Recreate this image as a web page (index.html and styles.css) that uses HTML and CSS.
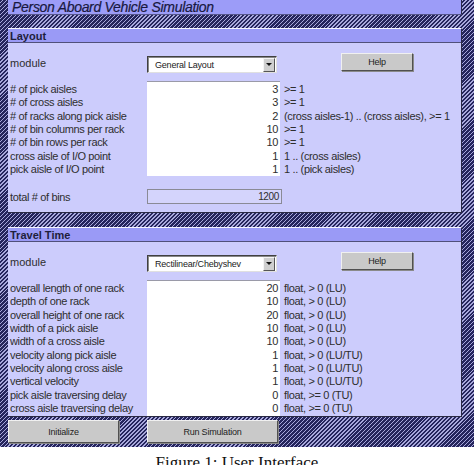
FILE: index.html
```html
<!DOCTYPE html>
<html>
<head>
<meta charset="utf-8">
<link rel="stylesheet" href="styles.css">
</head>
<body>
<div class="app">
  <div class="titlebar">Person Aboard Vehicle Simulation</div>

  <section class="panel panel-layout">
    <div class="panel-head">Layout</div>
    <div class="panel-body">
      <div class="module-row">
        <div class="label">module</div>
        <div class="select"><span class="select-text">General Layout</span><span class="select-arrow"><span class="tri"></span></span></div>
        <button class="btn help">Help</button>
      </div>
      <div class="fields">
        <div class="col labels">
          <div>&#35; of pick aisles</div>
          <div>&#35; of cross aisles</div>
          <div>&#35; of racks along pick aisle</div>
          <div>&#35; of bin columns per rack</div>
          <div>&#35; of bin rows per rack</div>
          <div>cross aisle of I/O point</div>
          <div>pick aisle of I/O point</div>
        </div>
        <div class="col values">
          <div>3</div><div>3</div><div>2</div><div>10</div><div>10</div><div>1</div><div>1</div>
        </div>
        <div class="col descs">
          <div>&gt;= 1</div>
          <div>&gt;= 1</div>
          <div>(cross aisles-1) .. (cross aisles), &gt;= 1</div>
          <div>&gt;= 1</div>
          <div>&gt;= 1</div>
          <div>1 .. (cross aisles)</div>
          <div>1 .. (pick aisles)</div>
        </div>
      </div>
      <div class="total-row">
        <div class="label">total # of bins</div>
        <div class="total-box">1200</div>
      </div>
    </div>
  </section>

  <section class="panel panel-travel">
    <div class="panel-head">Travel Time</div>
    <div class="panel-body">
      <div class="module-row">
        <div class="label">module</div>
        <div class="select"><span class="select-text">Rectilinear/Chebyshev</span><span class="select-arrow"><span class="tri"></span></span></div>
        <button class="btn help">Help</button>
      </div>
      <div class="fields fields-travel">
        <div class="col labels">
          <div>overall length of one rack</div>
          <div>depth of one rack</div>
          <div>overall height of one rack</div>
          <div>width of a pick aisle</div>
          <div>width of a cross aisle</div>
          <div>velocity along pick aisle</div>
          <div>velocity along cross aisle</div>
          <div>vertical velocity</div>
          <div>pick aisle traversing delay</div>
          <div>cross aisle traversing delay</div>
        </div>
        <div class="col values">
          <div>20</div><div>10</div><div>20</div><div>10</div><div>10</div><div>1</div><div>1</div><div>1</div><div>0</div><div>0</div>
        </div>
        <div class="col descs">
          <div>float, &gt; 0 (LU)</div>
          <div>float, &gt; 0 (LU)</div>
          <div>float, &gt; 0 (LU)</div>
          <div>float, &gt; 0 (LU)</div>
          <div>float, &gt; 0 (LU)</div>
          <div>float, &gt; 0 (LU/TU)</div>
          <div>float, &gt; 0 (LU/TU)</div>
          <div>float, &gt; 0 (LU/TU)</div>
          <div>float, &gt;= 0 (TU)</div>
          <div>float, &gt;= 0 (TU)</div>
        </div>
      </div>
    </div>
  </section>

  <div class="actions">
    <button class="btn act act-init">Initialize</button>
    <button class="btn act act-run">Run Simulation</button>
  </div>
</div>
<div class="caption">Figure 1: User Interface</div>
</body>
</html>
```

FILE: styles.css
```css
html, body {
  margin: 0;
  padding: 0;
  background: #ffffff;
}
body {
  width: 474px;
  height: 465px;
  overflow: hidden;
  font-family: "Liberation Sans", Arial, sans-serif;
  color: #2e2e2e;
}
.app {
  width: 474px;
  height: 447px;
  box-sizing: border-box;
  padding: 0 12px 0 8px;
  background: repeating-linear-gradient(135deg, #25255c 0px, #25255c 1.8px, #a8a8dc 1.8px, #a8a8dc 2.8px);
  overflow: hidden;
}
.titlebar {
  height: 14px;
  background: #9c9cf8;
  border-bottom: 1px solid #55558a;
  border-right: 1px solid #2a2a4a;
  font-style: italic;
  font-size: 14px;
  line-height: 15px;
  padding-left: 4px;
  color: #181840;
  white-space: nowrap;
  letter-spacing: -0.3px;
  -webkit-text-stroke: 0.2px #181840;
}
.panel {
  background: #ccccfc;
  border-top: 1px solid #f4f4ff;
  border-right: 1px solid #2a2a44;
  border-bottom: 1px solid #2a2a44;
  overflow: hidden;
}
.panel-layout { margin-top: 13px; height: 183px; }
.panel-travel { margin-top: 14px; height: 188px; }
.panel-head {
  height: 13px;
  background: #9a9af6;
  border-bottom: 1px solid #50507a;
  font-weight: bold;
  font-size: 11px;
  line-height: 14px;
  padding-left: 2px;
  color: #1e1e3c;
}
.panel-body {
  font-size: 11px;
}
.label {
  width: 137px;
  padding-left: 2px;
  flex: none;
}
.module-row {
  display: flex;
  height: 20px;
  margin-top: 10px;
}
.module-row .label {
  line-height: 20px;
}
.select {
  width: 128px;
  height: 15px;
  margin-top: 3px;
  background: #ffffff;
  border-top: 1px solid #404040;
  border-left: 1px solid #404040;
  border-right: 1px solid #e0e0e0;
  border-bottom: 1px solid #e0e0e0;
  display: flex;
  align-items: center;
  box-shadow: inset 1px 1px 0 #888;
  flex: none;
}
.select-text {
  flex: 1;
  font-size: 9px;
  padding-left: 7px;
  color: #222;
  letter-spacing: -0.2px;
  white-space: nowrap;
}
.select-arrow {
  width: 10px;
  height: 12px;
  margin-right: 1px;
  background: #cfcfcf;
  border-top: 1px solid #f4f4f4;
  border-left: 1px solid #f4f4f4;
  border-right: 1px solid #555;
  border-bottom: 1px solid #555;
  display: flex;
  align-items: center;
  justify-content: center;
}
.tri {
  width: 0;
  height: 0;
  border-left: 3px solid transparent;
  border-right: 3px solid transparent;
  border-top: 3px solid #111;
}
.btn {
  font-family: "Liberation Sans", Arial, sans-serif;
  font-size: 9px;
  color: #222;
  background: #c9c9c9;
  border-top: 1px solid #f0f0f0;
  border-left: 1px solid #f0f0f0;
  border-right: 1px solid #505050;
  border-bottom: 1px solid #505050;
  box-shadow: 1px 1px 0 #8a8a8a;
  padding: 0;
  margin: 0;
  box-sizing: border-box;
  letter-spacing: -0.2px;
  flex: none;
}
.help {
  width: 72px;
  height: 18px;
  margin-left: 64px;
}
.fields {
  display: flex;
  margin-top: 9px;
  line-height: 13.33px;
  letter-spacing: -0.35px;
}
.col > div { height: 13.33px; white-space: nowrap; }
.labels {
  width: 137px;
  padding-left: 2px;
  padding-top: 1px;
  flex: none;
}
.values {
  width: 131px;
  background: #ffffff;
  text-align: right;
  padding: 1px 2px 0 0;
  border-top: 1px solid #9a9aa8;
  margin-top: -1px;
  height: 93px;
  flex: none;
}
.fields-travel .values {
  height: 140px;
}
.descs {
  padding-left: 4px;
  padding-top: 1px;
}
.total-row {
  display: flex;
  margin-top: 13px;
  height: 15px;
  letter-spacing: -0.35px;
}
.total-row .label { line-height: 16px; }
.total-box {
  width: 131px;
  height: 13px;
  border: 1px solid #8a8a96;
  background: #d4d4fc;
  text-align: right;
  padding-right: 2px;
  line-height: 14px;
  font-size: 10px;
  flex: none;
}
.actions {
  display: flex;
  gap: 28px;
  padding-top: 3px;
}
.act {
  height: 23px;
}
.act-init { width: 111px; }
.act-run { width: 131px; }
.caption {
  font-family: "Liberation Serif", "Times New Roman", serif;
  font-size: 17px;
  text-align: center;
  line-height: 20px;
  margin-top: 6px;
  color: #111;
}
```
